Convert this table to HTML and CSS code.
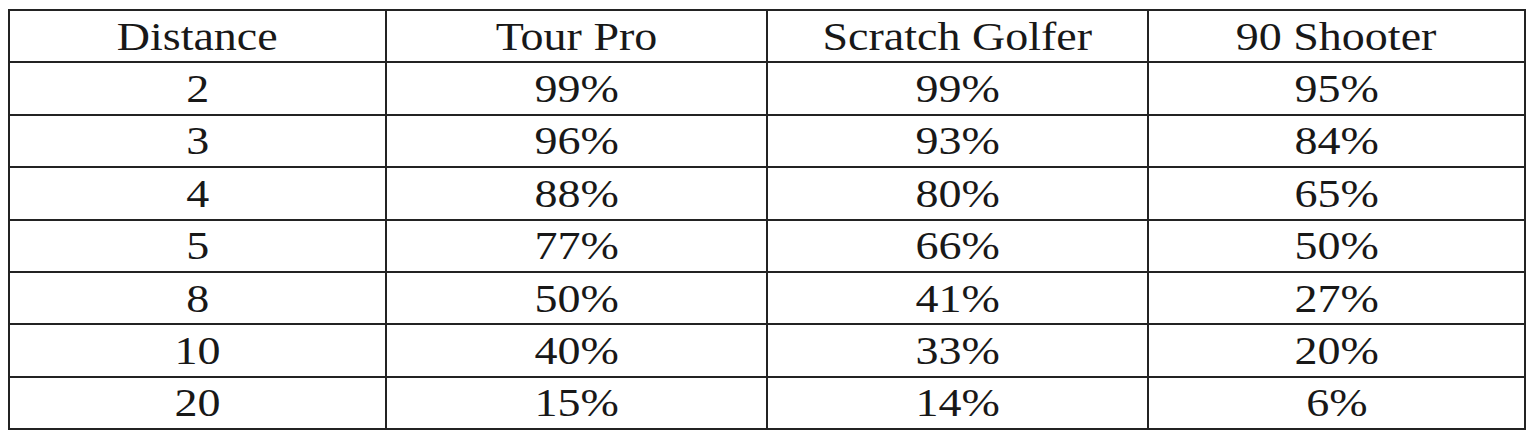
FILE: index.html
```html
<!DOCTYPE html>
<html>
<head>
<meta charset="utf-8">
<link rel="stylesheet" href="styles.css">
</head>
<body>
<table class="stats">
  <colgroup><col class="c-edge"><col class="c-mid"><col class="c-mid"><col class="c-last"></colgroup>
  <tr class="head"><td><span>Distance</span></td><td><span>Tour Pro</span></td><td><span>Scratch Golfer</span></td><td><span>90 Shooter</span></td></tr>
  <tr><td><span>2</span></td><td><span>99%</span></td><td><span>99%</span></td><td><span>95%</span></td></tr>
  <tr><td><span>3</span></td><td><span>96%</span></td><td><span>93%</span></td><td><span>84%</span></td></tr>
  <tr><td><span>4</span></td><td><span>88%</span></td><td><span>80%</span></td><td><span>65%</span></td></tr>
  <tr><td><span>5</span></td><td><span>77%</span></td><td><span>66%</span></td><td><span>50%</span></td></tr>
  <tr><td><span>8</span></td><td><span>50%</span></td><td><span>41%</span></td><td><span>27%</span></td></tr>
  <tr><td><span>10</span></td><td><span>40%</span></td><td><span>33%</span></td><td><span>20%</span></td></tr>
  <tr><td><span>20</span></td><td><span>15%</span></td><td><span>14%</span></td><td><span>6%</span></td></tr>
</table>
</body>
</html>
```
FILE: styles.css
```css
html, body {
  margin: 0;
  background: #ffffff;
}
body {
  padding: 9px 12px 0 8px;
  font-family: "Liberation Serif", "Times New Roman", serif;
  color: #181818;
}
.stats {
  width: 1516px;
  border-collapse: collapse;
  table-layout: fixed;
  border: 2px solid #232323;
}
.c-edge { width: 377px; }
.c-mid { width: 381px; }
.c-last { width: 377px; }
.stats td {
  border: 2px solid #232323;
  height: 50.4px;
  padding: 0;
  text-align: center;
  vertical-align: middle;
  font-size: 39px;
  line-height: 1;
}
.stats td span {
  display: inline-block;
  transform: scaleX(1.18);
}
```
